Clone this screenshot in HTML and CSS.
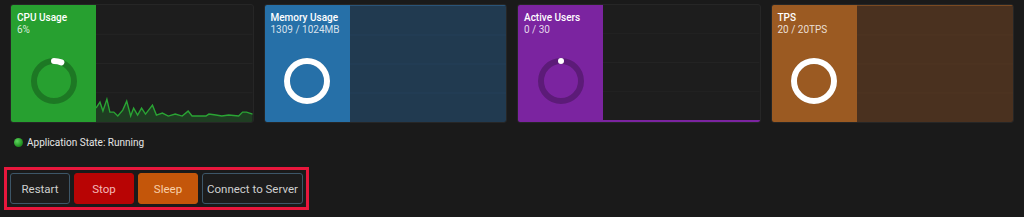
FILE: index.html
```html
<!DOCTYPE html>
<html lang="en">
<head>
  <meta charset="UTF-8" />
  <title>Server Dashboard</title>
  <link rel="stylesheet" href="styles.css">
</head>
<body>

<div id="stats">
  <div class="stat-card cpu">
    <div class="stat-side">
      <div class="stat-title">CPU Usage</div>
      <div class="stat-value">6%</div>
      <div class="ring-wrap">
        <svg class="ring" width="46" height="46" viewBox="0 0 46 46">
          <circle class="ring-track" cx="23" cy="23" r="20"></circle>
          <circle class="ring-fill" cx="23" cy="23" r="20" stroke-dasharray="7.5 200" transform="rotate(-90 23 23)"></circle>
        </svg>
      </div>
    </div>
    <div class="stat-chart">
      <svg viewBox="0 0 158 118" preserveAspectRatio="none">
        <line class="grid" x1="0" y1="29.5" x2="158" y2="29.5"></line>
        <line class="grid" x1="0" y1="59" x2="158" y2="59"></line>
        <line class="grid" x1="0" y1="88.5" x2="158" y2="88.5"></line>
        <polygon class="area" points="0,118 0,104 4,98 7,107 11,95 14,108 18,108 22,112 27,106 31,97 35,112 38,104 42,111 46,104 50,110 57,101 61,111 67,109 73,112 80,110 87,112 93,107 97,112 111,112 114,110 121,111 127,112 134,111 144,112 148,108 152,108 158,110 158,118"></polygon>
        <polyline class="line" points="0,104 4,98 7,107 11,95 14,108 18,108 22,112 27,106 31,97 35,112 38,104 42,111 46,104 50,110 57,101 61,111 67,109 73,112 80,110 87,112 93,107 97,112 111,112 114,110 121,111 127,112 134,111 144,112 148,108 152,108 158,110"></polyline>
      </svg>
    </div>
  </div>

  <div class="stat-card memory">
    <div class="stat-side">
      <div class="stat-title">Memory Usage</div>
      <div class="stat-value">1309 / 1024MB</div>
      <div class="ring-wrap">
        <svg class="ring" width="46" height="46" viewBox="0 0 46 46">
          <circle class="ring-track" cx="23" cy="23" r="20"></circle>
          <circle class="ring-fill" cx="23" cy="23" r="20"></circle>
        </svg>
      </div>
    </div>
    <div class="stat-chart">
      <svg viewBox="0 0 158 118" preserveAspectRatio="none">
        <line class="grid" x1="0" y1="29.5" x2="158" y2="29.5"></line>
        <line class="grid" x1="0" y1="59" x2="158" y2="59"></line>
        <line class="grid" x1="0" y1="88.5" x2="158" y2="88.5"></line>
      </svg>
    </div>
  </div>

  <div class="stat-card users">
    <div class="stat-side">
      <div class="stat-title">Active Users</div>
      <div class="stat-value">0 / 30</div>
      <div class="ring-wrap">
        <svg class="ring" width="46" height="46" viewBox="0 0 46 46">
          <circle class="ring-track" cx="23" cy="23" r="20"></circle>
          <circle class="ring-fill" cx="23" cy="23" r="20" stroke-dasharray="0.01 200" transform="rotate(-90 23 23)"></circle>
        </svg>
      </div>
    </div>
    <div class="stat-chart">
      <svg viewBox="0 0 158 118" preserveAspectRatio="none">
        <line class="grid" x1="0" y1="29.5" x2="158" y2="29.5"></line>
        <line class="grid" x1="0" y1="59" x2="158" y2="59"></line>
        <line class="grid" x1="0" y1="88.5" x2="158" y2="88.5"></line>
      </svg>
    </div>
  </div>

  <div class="stat-card tps">
    <div class="stat-side">
      <div class="stat-title">TPS</div>
      <div class="stat-value">20 / 20TPS</div>
      <div class="ring-wrap">
        <svg class="ring" width="46" height="46" viewBox="0 0 46 46">
          <circle class="ring-track" cx="23" cy="23" r="20"></circle>
          <circle class="ring-fill" cx="23" cy="23" r="20"></circle>
        </svg>
      </div>
    </div>
    <div class="stat-chart">
      <svg viewBox="0 0 158 118" preserveAspectRatio="none">
        <line class="grid" x1="0" y1="29.5" x2="158" y2="29.5"></line>
        <line class="grid" x1="0" y1="59" x2="158" y2="59"></line>
        <line class="grid" x1="0" y1="88.5" x2="158" y2="88.5"></line>
      </svg>
    </div>
  </div>
</div>

<div id="app-state">
  <span class="state-dot"></span>
  <span>Application State: Running</span>
</div>

<div id="controls">
  <button class="ctl-btn">Restart</button>
  <button class="ctl-btn stop">Stop</button>
  <button class="ctl-btn sleep">Sleep</button>
  <button class="ctl-btn">Connect to Server</button>
</div>

</body>
</html>
```

FILE: styles.css
```css
body {
  margin: 0;
  background: #1a1a1a;
  color: #e8e8e8;
  font-family: Roboto, "Liberation Sans", sans-serif;
}

#stats {
  display: flex;
  gap: 10px;
  padding: 4px 10px 0;
}

.stat-card {
  flex: 1;
  display: flex;
  height: 119px;
  box-sizing: border-box;
  border: 1px solid #262626;
  border-radius: 3px;
  overflow: hidden;
  background: #1d1d1d;
}

.stat-side {
  width: 85px;
  flex-shrink: 0;
  display: flex;
  flex-direction: column;
  padding: 7px 6px 0;
  box-sizing: border-box;
  white-space: nowrap;
}

.stat-title {
  font-size: 10px;
  line-height: 12px;
  font-weight: 500;
  color: #fff;
}

.stat-value {
  font-size: 10px;
  line-height: 12px;
  color: rgba(255, 255, 255, 0.82);
}

.ring-wrap {
  flex: 1;
  display: flex;
  align-items: center;
  justify-content: center;
  padding-top: 4px;
}

.ring circle {
  fill: none;
  stroke-width: 6;
}

.ring-track {
  stroke: rgba(0, 0, 0, 0.25);
}

.ring-fill {
  stroke: #fff;
  stroke-linecap: round;
}

.stat-chart {
  flex: 1;
  position: relative;
}

.stat-chart svg {
  display: block;
  width: 100%;
  height: 100%;
}

.grid {
  stroke: #242424;
  stroke-width: 1;
}

.cpu .stat-side { background: #27a030; }
.cpu .area { fill: #1f3d22; }
.cpu .line {
  fill: none;
  stroke: #2aa434;
  stroke-width: 1.4;
}

.memory .stat-side { background: #2670a8; }
.memory .stat-chart {
  background: #213a50;
  border-top: 1px solid #2a5478;
}
.memory .grid { stroke: #25405a; }

.users .stat-side { background: #7b24a0; }
.users .stat-chart { border-bottom: 2px solid #7b24a0; }

.tps .stat-side { background: #9b5a22; }
.tps .stat-chart {
  background: #4a311f;
  border-top: 1px solid #7a4a22;
}
.tps .grid { stroke: #4f3523; }

#app-state {
  display: flex;
  align-items: center;
  gap: 4px;
  margin: 14px 0 0 14px;
  font-size: 10px;
  color: #e6e6e6;
}

.state-dot {
  width: 9px;
  height: 9px;
  border-radius: 50%;
  background: radial-gradient(circle at 35% 35%, #5ed65e, #1c8a1c 70%);
}

#controls {
  display: inline-flex;
  gap: 4px;
  margin: 19px 0 0 4px;
  padding: 3px;
  border: 3px solid #e8173c;
}

.ctl-btn {
  height: 31px;
  min-width: 60px;
  padding: 0 4px;
  font-family: Roboto, "Liberation Sans", sans-serif;
  font-size: 11.5px;
  color: #cfcfcf;
  background: #1c1c1c;
  border: 1px solid #3d5668;
  border-radius: 3px;
  cursor: pointer;
}

.ctl-btn.stop {
  background: #b80404;
  border-color: #b80404;
  color: #f3b8b8;
}

.ctl-btn.sleep {
  background: #c4560a;
  border-color: #c4560a;
  color: #f8cfa8;
}
```
